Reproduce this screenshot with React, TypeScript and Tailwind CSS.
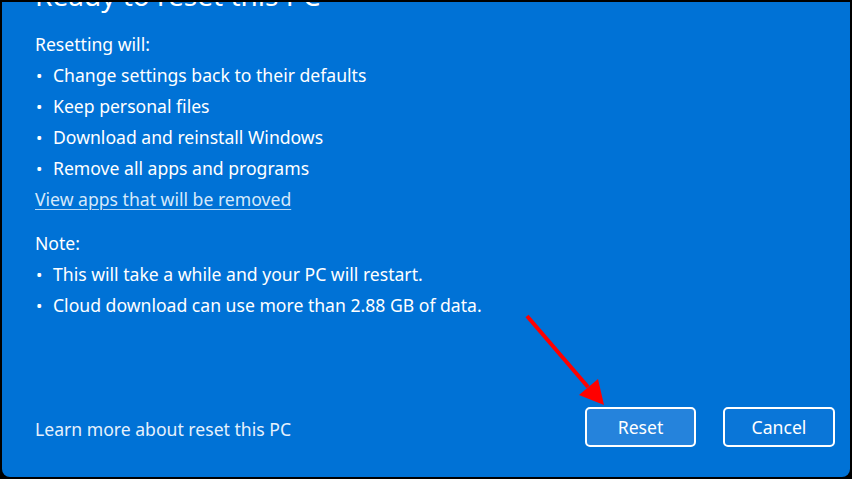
import React from 'react';

const items = [
  'Change settings back to their defaults',
  'Keep personal files',
  'Download and reinstall Windows',
  'Remove all apps and programs',
];

const notes = [
  'This will take a while and your PC will restart.',
  'Cloud download can use more than 2.88 GB of data.',
];

function Bullet({ text }: { text: string }) {
  return (
    <div className="flex items-center h-[31px]">
      <span className="w-[18px] pl-[1px] text-[17px]">•</span>
      <span>{text}</span>
    </div>
  );
}

export default function App() {
  return (
    <div className="w-[852px] h-[479px] bg-black p-[2px] overflow-hidden" style={{ fontFamily: '"Noto Sans", "Open Sans", sans-serif' }}>
      <div className="relative w-full h-full bg-[#0072d6] rounded-b-[8px] text-white overflow-hidden flex flex-col">
        <div className="px-[33px] -mt-[27px] text-[28px] leading-[40px] h-[40px] whitespace-nowrap">Ready to reset this PC</div>
        <div className="px-[33px] text-[17.6px] mt-[14px] flex flex-col">
          <div className="h-[31px] flex items-center">Resetting will:</div>
          {items.map(t => <Bullet key={t} text={t} />)}
          <div className="h-[31px] flex items-center">
            <a className="underline underline-offset-[3px] decoration-[1px] text-[#d6e9fb] decoration-[#b8d8f5]">View apps that will be removed</a>
          </div>
          <div className="h-[13px]" />
          <div className="h-[31px] flex items-center">Note:</div>
          {notes.map(t => <Bullet key={t} text={t} />)}
        </div>
        <div className="flex-1" />
        <div className="flex items-center pl-[33px] pr-[15px] pb-[30px] text-[17.6px]">
          <div className="flex-1 text-[#e6f1fc] pt-[4px]">Learn more about reset this PC</div>
          <button className="w-[111px] h-[40px] rounded-[5px] border-2 border-white bg-[#2583dc] mr-[27px]">Reset</button>
          <button className="w-[112px] h-[40px] rounded-[5px] border-2 border-white bg-[#0a76d8]">Cancel</button>
        </div>
        <svg className="absolute left-0 top-0" width="852" height="479" viewBox="0 0 852 479">
          <line x1="525" y1="314" x2="586" y2="385" stroke="#ff0000" strokeWidth="4" />
          <polygon points="602,403 577,393 596,377" fill="#ff0000" />
        </svg>
      </div>
    </div>
  );
}
